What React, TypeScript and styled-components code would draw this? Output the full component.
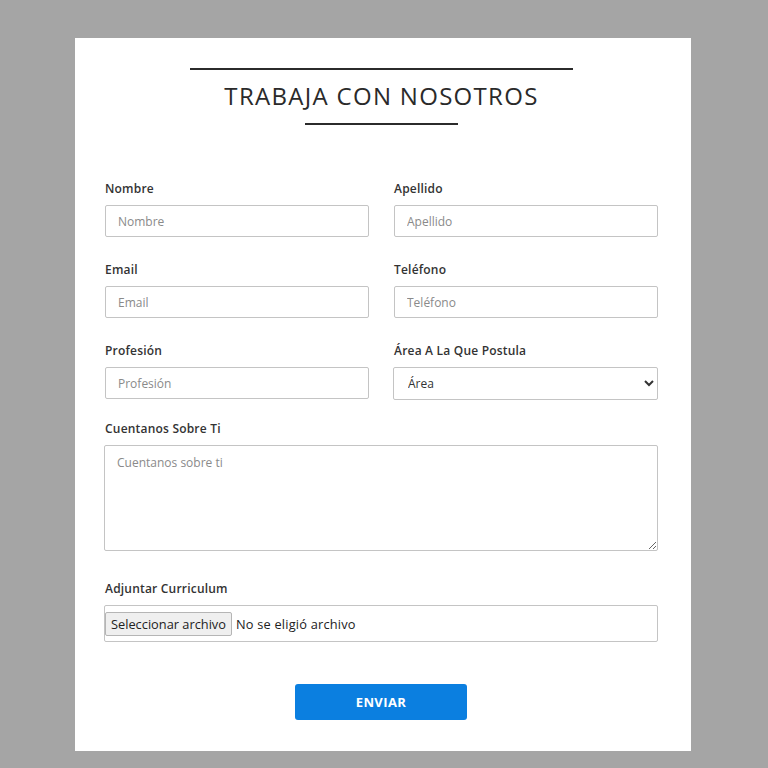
import { useState } from "react";
import styled, { createGlobalStyle } from "styled-components";

const GlobalStyle = createGlobalStyle`
  * {
    box-sizing: border-box;
  }
  body {
    margin: 0;
    background: #a5a5a5;
    font-family: "Open Sans", "Liberation Sans", sans-serif;
  }
`;

const fields = [
  { label: "Nombre", placeholder: "Nombre" },
  { label: "Apellido", placeholder: "Apellido" },
  { label: "Email", placeholder: "Email" },
  { label: "Teléfono", placeholder: "Teléfono" },
  { label: "Profesión", placeholder: "Profesión" },
];

const App = () => {
  const [fileName, setFileName] = useState("");

  return (
    <>
      <GlobalStyle />
      <Page>
        <Card>
          <Header>
            <Rule $width={383} />
            <Title>TRABAJA CON NOSOTROS</Title>
            <Rule $width={153} />
          </Header>

          <Form onSubmit={(e) => e.preventDefault()}>
            {fields.map((f) => (
              <Field key={f.label}>
                <Label>{f.label}</Label>
                <Input type="text" placeholder={f.placeholder} />
              </Field>
            ))}
            <Field>
              <Label>Área A La Que Postula</Label>
              <Select defaultValue="">
                <option value="">Área</option>
                <option value="ventas">Ventas</option>
                <option value="admin">Administración</option>
              </Select>
            </Field>
            <Field $wide $top={-4}>
              <Label>Cuentanos Sobre Ti</Label>
              <TextArea placeholder="Cuentanos sobre ti" />
            </Field>
            <Field $wide $top={5}>
              <Label>Adjuntar Curriculum</Label>
              <FileBox>
                <HiddenFile
                  type="file"
                  onChange={(e) => setFileName(e.target.files?.[0]?.name ?? "")}
                />
                <FileButton>Seleccionar archivo</FileButton>
                <FileName>{fileName || "No se eligió archivo"}</FileName>
              </FileBox>
            </Field>
            <Actions>
              <SubmitButton type="submit">ENVIAR</SubmitButton>
            </Actions>
          </Form>
        </Card>
      </Page>
    </>
  );
};

export default App;

const Page = styled.div`
  width: 768px;
  height: 768px;
  padding: 38px 77px 0 75px;
`;

const Card = styled.div`
  background: #ffffff;
  height: 713px;
  padding: 30px 33px 0 29px;
`;

const Header = styled.div`
  display: flex;
  flex-direction: column;
  align-items: center;
  margin-left: 1px;
`;

const Rule = styled.div<{ $width: number }>`
  width: ${(p) => p.$width}px;
  height: 2px;
  background: #2b2b2b;
`;

const Title = styled.h1`
  margin: 11px 0 12px;
  font-family: "Open Sans", "Liberation Sans", sans-serif;
  font-weight: 400;
  font-size: 24px;
  line-height: 30px;
  letter-spacing: 1.3px;
  color: #2a2a2a;
`;

const Form = styled.form`
  display: grid;
  grid-template-columns: 265px 265px;
  column-gap: 24px;
  row-gap: 25px;
  margin-top: 56px;
`;

const Field = styled.div<{ $wide?: boolean; $top?: number }>`
  display: flex;
  flex-direction: column;
  grid-column: ${(p) => (p.$wide ? "1 / -1" : "auto")};
  margin-top: ${(p) => p.$top ?? 0}px;
`;

const Label = styled.label`
  font-family: "Open Sans", "Liberation Sans", sans-serif;
  font-weight: 600;
  font-size: 12px;
  line-height: 16px;
  letter-spacing: 0.2px;
  color: #333333;
  margin-bottom: 8px;
  padding-left: 1px;
`;

const Input = styled.input`
  height: 32px;
  margin-left: 1px;
  padding: 0 12px;
  border: 1px solid #c4c4c4;
  border-radius: 2px;
  font-family: "Open Sans", "Liberation Sans", sans-serif;
  font-size: 12px;
  color: #333;
  outline: none;

  &::placeholder {
    color: #8a8a8a;
  }
`;

const Select = styled.select`
  height: 33px;
  padding: 0 10px;
  border: 1px solid #c4c4c4;
  border-radius: 2px;
  background: #fff;
  font-family: "Open Sans", "Liberation Sans", sans-serif;
  font-size: 12px;
  color: #333;
`;

const TextArea = styled.textarea`
  height: 106px;
  padding: 8px 12px;
  border: 1px solid #c4c4c4;
  border-radius: 2px;
  font-family: "Open Sans", "Liberation Sans", sans-serif;
  font-size: 12px;
  color: #333;
  resize: vertical;

  &::placeholder {
    color: #8a8a8a;
  }
`;

const FileBox = styled.label`
  height: 37px;
  border: 1px solid #c4c4c4;
  border-radius: 2px;
  display: flex;
  align-items: center;
  cursor: pointer;
`;

const HiddenFile = styled.input`
  display: none;
`;

const FileButton = styled.span`
  height: 24px;
  padding: 0 5px;
  display: flex;
  align-items: center;
  border: 1px solid #b5b5b5;
  border-radius: 2px;
  background: #efefef;
  font-family: "Open Sans", "Liberation Sans", sans-serif;
  font-size: 12.8px;
  color: #222;
`;

const FileName = styled.span`
  margin-left: 4px;
  font-family: "Open Sans", "Liberation Sans", sans-serif;
  font-size: 12.8px;
  letter-spacing: 0.2px;
  color: #222;
`;

const Actions = styled.div`
  grid-column: 1 / -1;
  display: flex;
  justify-content: center;
  margin-top: 17px;
`;

const SubmitButton = styled.button`
  width: 172px;
  height: 36px;
  border: none;
  border-radius: 3px;
  background: #0b7fe0;
  color: #ffffff;
  font-family: "Open Sans", "Liberation Sans", sans-serif;
  font-weight: 700;
  font-size: 13px;
  letter-spacing: 0.4px;
  cursor: pointer;
`;
